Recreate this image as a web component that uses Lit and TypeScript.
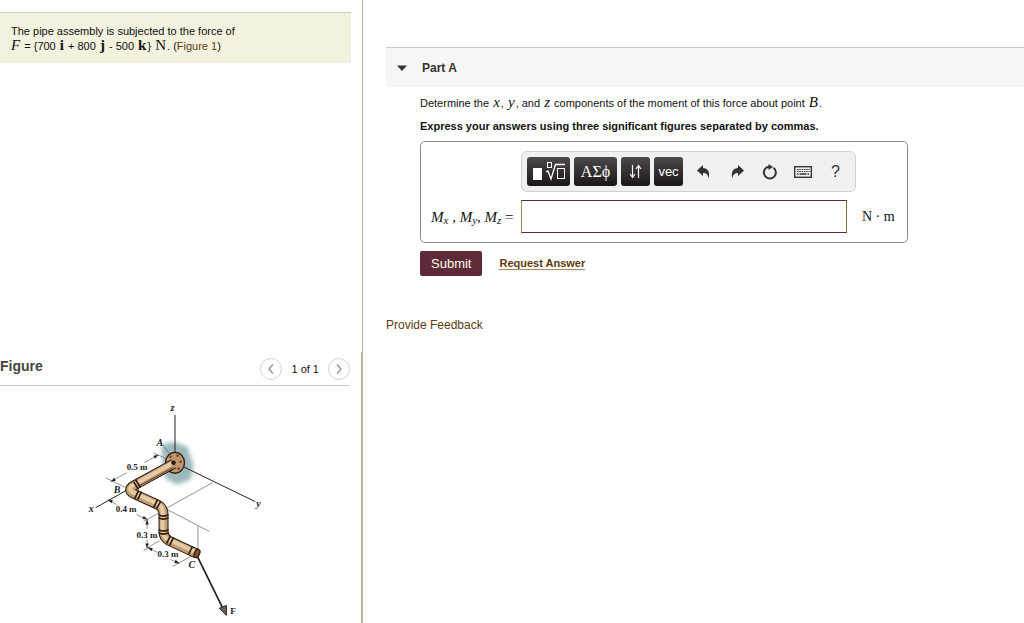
import { LitElement, html, css, svg } from "lit";
import { customElement } from "lit/decorators.js";

@customElement("pipe-figure")
class PipeFigure extends LitElement {
  static styles = css`
    :host { display: block; }
    svg { display: block; width: 100%; }
    text { font-family: "Liberation Serif", serif; font-weight: bold; font-size: 9px; fill: #1c1c1c; }
    .axis { font-style: italic; font-size: 10px; }
    .thin { stroke: #777; stroke-width: 0.8; fill: none; }
    .line { stroke: #222; stroke-width: 1; fill: none; }
    .edge { stroke: #2b1a0e; stroke-width: 10; fill: none; stroke-linejoin: round; }
    .body { stroke: #c49c74; stroke-width: 8; fill: none; stroke-linejoin: round; }
    .shine { stroke: #e5cba6; stroke-width: 4; fill: none; stroke-linejoin: round; }
    .collar { stroke: #2b1a0e; stroke-width: 1.6; fill: none; }
  `;

  private arrow(x: number, y: number, angle: number, size = 5) {
    return svg`<path transform="translate(${x} ${y}) rotate(${angle})" d=${`M0 0L${-size} -1.7V1.7Z`} fill="#222"></path>`;
  }

  render() {
    return html`
      <svg viewBox="0 386 351 237" role="img" aria-label="Pipe assembly from A to C with force F acting at C">
        <defs>
          <filter id="soft" x="-40%" y="-40%" width="180%" height="180%"><feGaussianBlur stdDeviation="2"></feGaussianBlur></filter>
        </defs>
        <path d="M162 445L173 442L188 447L194 466L191 480L178 485L166 479L163 465Z" fill="#9db7bc" filter="url(#soft)"></path>

        <path class="thin" d="M213 483L168 508M168 510L210 532M198.500 526V551"></path>
        <path class="thin" d="M106 478L126 488M154 453L169 460M144 522L160 513M144 551L160 541M173 567L193 556"></path>
        <path class="line" d="M175.500 415V455M184 467L256 502M96 508L128 490"></path>
        <path class="thin" d="M163 445L170 454"></path>
        <path class="thin" d="M111 482L127 473M145 463L158 455M108 500L117 505M137 515L148 520M147.500 520V529M147.500 540V548M148 548L158 553M171 560L180 564"></path>
        ${this.arrow(111, 482, 151)} ${this.arrow(159, 455, -29)}
        ${this.arrow(108, 500, 205)} ${this.arrow(148, 520, 25)}
        ${this.arrow(147.5, 520, -90)} ${this.arrow(147.5, 549, 90)}
        ${this.arrow(148, 548, 205)} ${this.arrow(180, 564, 25)}

        <ellipse cx="175.500" cy="463" rx="9.500" ry="10.500" fill="#c0966d" stroke="#2b1a0e" stroke-width="1.300"></ellipse>
        <g fill="#69452e">
          <circle cx="171" cy="457" r="1.300"></circle><circle cx="178" cy="456" r="1.300"></circle>
          <circle cx="181" cy="462" r="1.300"></circle><circle cx="179" cy="469" r="1.300"></circle>
          <circle cx="172" cy="470" r="1.300"></circle>
        </g>
        <path class="edge" d="M174 464L134 486Q127 490 134 494L158 505Q164 508 164 515V532Q164 538 169 541L197 554"></path>
        <path class="body" d="M174 464L134 486Q127 490 134 494L158 505Q164 508 164 515V532Q164 538 169 541L196 553.500"></path>
        <path class="shine" d="M172 464L134 485Q127 489 134 493L158 504Q164 507 163 515V532Q164 538 169 540L195 552"></path>
        <path d="M173 468L140 486" stroke="#5a3820" stroke-width="1" fill="none"></path>
        <path class="collar" d="M136 480L141 488M134 482L139 490M139 491L135 499M142 492L138 500M158 500L154 508M161 502L157 509M159 515Q164 518 169 515M159 518Q164 521 169 518M159 530Q164 533 169 530M159 533Q164 536 169 533M171 536L167 544M174 538L170 546M193 547L189 555"></path>
        <circle cx="174" cy="463" r="2.300" fill="#2b1a0e"></circle>
        <ellipse cx="197.500" cy="554" rx="2.600" ry="4.500" transform="rotate(25 197.500 554)" fill="#8a4f25" stroke="#2b1a0e" stroke-width="1.200"></ellipse>

        <path d="M198 557L224 610" stroke="#222" stroke-width="1.700"></path>
        <path d="M227 616L220 609L227 606Z" fill="#666" stroke="#222" stroke-width="1"></path>

        <text class="axis" x="171" y="411">z</text>
        <text class="axis" x="157" y="446">A</text>
        <text class="axis" x="114" y="493">B</text>
        <text class="axis" x="89" y="512">x</text>
        <text class="axis" x="257" y="507">y</text>
        <text class="axis" x="189" y="569">C</text>
        <text x="231" y="615">F</text>
        <text x="127" y="470">0.5 m</text>
        <text x="116" y="512">0.4 m</text>
        <text x="137" y="538">0.3 m</text>
        <text x="158" y="558">0.3 m</text>
      </svg>
    `;
  }
}

@customElement("answer-editor")
class AnswerEditor extends LitElement {
  static styles = css`
    :host { display: block; }
    .box {
      display: grid;
      grid-template-columns: 90px minmax(0, 1fr) 60px;
      row-gap: 8px;
      align-items: center;
      padding: 9px 0 9px 10px;
      border: 1px solid #8c8c8c;
      border-radius: 5px;
    }
    .tools {
      grid-column: 2 / 4;
      justify-self: start;
      display: flex;
      align-items: center;
      gap: 6px;
      box-sizing: border-box;
      height: 41px;
      padding: 0 5px;
      background: #f0f0f0;
      border: 1px solid #cfcfcf;
      border-radius: 6px;
    }
    .group { display: flex; gap: 4px; }
    button { margin: 0; padding: 0; border: 0; color: #333; font-family: "Liberation Sans", Arial, sans-serif; }
    .key {
      display: flex;
      align-items: center;
      justify-content: center;
      width: 29px;
      height: 29px;
      border-radius: 3px;
      background: linear-gradient(#4d494a, #1b1718);
      color: #fff;
      font-size: 13px;
      line-height: 16px;
    }
    .wide { width: 43px; }
    .greek { font-family: "Liberation Serif", serif; font-size: 16px; }
    .plain {
      display: flex;
      align-items: center;
      justify-content: center;
      width: 29px;
      height: 29px;
      background: none;
      font-size: 16px;
    }
    .label, .unit { font: 15px/20px "Liberation Serif", serif; color: #111; white-space: nowrap; }
    .label { font-style: italic; }
    .label sub { font-size: 11px; line-height: 0; vertical-align: -2px; }
    .roman { font-style: normal; }
    .unit { padding-left: 15px; font-size: 14px; }
    input {
      box-sizing: border-box;
      width: 100%;
      min-width: 0;
      height: 33px;
      margin: 0;
      padding: 0 6px;
      background: #fff;
      border: 1px solid #5b2b3a;
      border-left-color: #a08a55;
      border-right-color: #8a6d35;
      border-radius: 0;
      font: 15px "Liberation Serif", serif;
    }
  `;

  render() {
    return html`
      <div class="box">
        <div class="tools" role="toolbar" aria-label="Equation tools">
          <div class="group">
            <button class="key wide" type="button" aria-label="Templates">
              <svg width="34" height="21" viewBox="0 0 34 21" fill="none" stroke="#fff">
                <rect x="1" y="7" width="9" height="12" fill="#fff" stroke="none"></rect>
                <rect x="15.500" y="1.500" width="4" height="5"></rect>
                <path d="M14 11L16 10L19 18L23.500 3.500H33" stroke-width="1.300"></path>
                <rect x="25.500" y="7.500" width="7" height="10"></rect>
              </svg>
            </button>
            <button class="key wide greek" type="button" aria-label="Symbols">ΑΣϕ</button>
            <button class="key" type="button" aria-label="Swap">
              <svg width="13" height="15" viewBox="0 0 13 15" fill="none" stroke="#fff" stroke-width="1.200">
                <path d="M3.500 1V13M1 10L3.500 13.500L6 10M9.500 14V2M7 5L9.500 1.500L12 5"></path>
              </svg>
            </button>
            <button class="key" type="button">vec</button>
          </div>
          <div class="group">
            <button class="plain" type="button" aria-label="Undo">
              <svg width="14" height="14" viewBox="0 0 14 14"><path d="M0 5.500L6 0V3C10.500 3 13.500 7 11.500 13.500C11 9.500 9.500 8 6 8V11Z" fill="#333"></path></svg>
            </button>
            <button class="plain" type="button" aria-label="Redo">
              <svg width="14" height="14" viewBox="0 0 14 14"><path d="M14 5.500L8 0V3C3.500 3 0.500 7 2.500 13.500C3 9.500 4.500 8 8 8V11Z" fill="#333"></path></svg>
            </button>
            <button class="plain" type="button" aria-label="Reset">
              <svg width="16" height="16" viewBox="0 0 16 16"><path d="M11.500 3.700A6 6 0 1 1 4.500 3.500L8 2.600" fill="none" stroke="#333" stroke-width="2"></path><path d="M6.500 0L11 3L6.500 6Z" fill="#333"></path></svg>
            </button>
            <button class="plain" type="button" aria-label="Keyboard">
              <svg width="18" height="12" viewBox="0 0 18 12" fill="none" stroke="#333">
                <rect x="0.700" y="0.700" width="16.600" height="10.600" stroke-width="1.400"></rect>
                <path d="M3 3.500H15.500M3 5.500H15.500" stroke-width="1.200" stroke-dasharray="1.500 0.800"></path>
                <path d="M3 8H4.500M5.500 8H12.500M13.500 8H15" stroke-width="1.400"></path>
              </svg>
            </button>
            <button class="plain" type="button" aria-label="Help">?</button>
          </div>
        </div>
        <label class="label" for="answer">M<sub>x</sub> , M<sub>y</sub>, M<sub>z</sub> <span class="roman">=</span></label>
        <input id="answer" type="text" autocomplete="off" />
        <span class="unit">N · m</span>
      </div>
    `;
  }
}

@customElement("app-root")
class AppRoot extends LitElement {
  static styles = css`
    :host {
      display: grid;
      grid-template-columns: minmax(0, 363fr) minmax(0, 661fr);
      min-height: 100vh;
      background: #fff;
      color: #111;
      font: 11px/14px "Liberation Sans", Arial, sans-serif;
    }
    .left { display: grid; grid-template-rows: 352px 1fr; }
    .top { padding: 12px 11px 0 0; border-right: 1px solid #c2ae9c; }
    .bottom { padding-right: 11px; border-right: 2px solid #c2ae9c; }
    .prompt {
      padding: 11px 11px 10px;
      background: #f3f2de;
      border-top: 1px solid #c9c9c0;
    }
    p { margin: 0; }
    a { color: #5e3a10; text-decoration: none; }
    .var, .rm, .vec { margin: 0 1px; font-family: "Liberation Serif", serif; font-size: 15px; line-height: 14px; }
    .prompt .var { margin-left: 0; }
    .var { font-style: italic; }
    .vec { font-weight: bold; }
    .bar {
      display: flex;
      align-items: center;
      justify-content: space-between;
      height: 33px;
      border-bottom: 1px solid #c8c8c8;
    }
    h2 { margin: 0; font-size: 14px; line-height: 16px; color: #444; padding-bottom: 6px; }
    .pager { display: flex; align-items: center; gap: 9px; }
    .round {
      display: flex;
      align-items: center;
      justify-content: center;
      box-sizing: border-box;
      width: 22px;
      height: 22px;
      padding: 0;
      background: #fff;
      border: 1px solid #d4d4d4;
      border-radius: 50%;
    }
    .right { padding: 47px 0 0 23px; }
    .part {
      display: flex;
      align-items: center;
      gap: 15px;
      height: 40px;
      padding-left: 11px;
      background: #f6f6f6;
      border-top: 1px solid #cdcdcd;
      box-sizing: border-box;
    }
    h3 { margin: 0; font-size: 12px; line-height: 16px; color: #333; }
    .toggle { display: flex; padding: 0; border: 0; background: none; }
    .content { max-width: 488px; padding: 8px 16px 0 34px; }
    .content p { line-height: 16px; margin-bottom: 7px; }
    .actions { display: flex; align-items: center; gap: 17px; padding-top: 8px; }
    .content .strong { font-weight: bold; }
    .submit {
      height: 25px;
      padding: 0 11px;
      border: 0;
      border-radius: 2px;
      background: #5e2a38;
      color: #fffbe8;
      font: 13px "Liberation Sans", Arial, sans-serif;
    }
    .request { font-weight: bold; border-bottom: 1px solid #b08a55; line-height: 12px; }
    .feedback { display: inline-block; margin-top: 42px; font-size: 12px; }
  `;

  render() {
    return html`
      <aside class="left">
        <section class="top">
          <div class="prompt">
            <p>The pipe assembly is subjected to the force of</p>
            <p><span class="var">F</span> = {700 <span class="vec">i</span> + 800 <span class="vec">j</span> - 500 <span class="vec">k</span>} <span class="rm">N</span>. (<a href="#figure">Figure 1</a>)</p>
          </div>
        </section>
        <section class="bottom" id="figure">
          <div class="bar">
            <h2>Figure</h2>
            <div class="pager">
              <button class="round" type="button" aria-label="Previous figure">
                <svg width="8" height="12" viewBox="0 0 8 12" fill="none" stroke="#999" stroke-width="1.500"><path d="M6 1.500L2 6L6 10.500"></path></svg>
              </button>
              <span>1 of 1</span>
              <button class="round" type="button" aria-label="Next figure">
                <svg width="8" height="12" viewBox="0 0 8 12" fill="none" stroke="#999" stroke-width="1.500"><path d="M2 1.500L6 6L2 10.500"></path></svg>
              </button>
            </div>
          </div>
          <pipe-figure></pipe-figure>
        </section>
      </aside>
      <main class="right">
        <header class="part">
          <button class="toggle" type="button" aria-label="Collapse Part A">
            <svg width="10" height="6" viewBox="0 0 10 6"><path d="M0 0.500H10L5 6Z" fill="#333"></path></svg>
          </button>
          <h3>Part A</h3>
        </header>
        <div class="content">
          <p>Determine the <span class="var">x</span>, <span class="var">y</span>, and <span class="var">z</span> components of the moment of this force about point <span class="var">B</span>.</p>
          <p class="strong">Express your answers using three significant figures separated by commas.</p>
          <answer-editor></answer-editor>
          <div class="actions">
            <button class="submit" type="button">Submit</button>
            <a class="request" href="#request">Request Answer</a>
          </div>
        </div>
        <a class="feedback" href="#feedback">Provide Feedback</a>
      </main>
    `;
  }
}
